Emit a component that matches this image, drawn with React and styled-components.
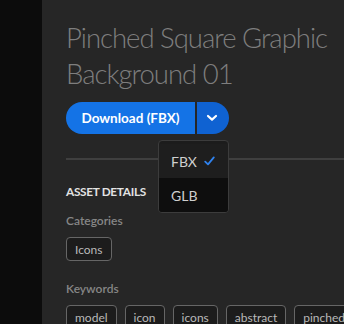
import React from "react";
import styled, { createGlobalStyle } from "styled-components";

const Global = createGlobalStyle`
  html, body { margin: 0; padding: 0; background: #262626; }
  body { font-family: Lato, "Open Sans", sans-serif; overflow: hidden; }
`;

const Page = styled.div`
  display: flex;
  width: 344px;
  height: 324px;
  overflow: hidden;
`;

const Rail = styled.div`
  width: 42px;
  flex: none;
  background: #0c0c0c;
`;

const Main = styled.main`
  flex: 1;
  min-width: 0;
  background: #262626;
  padding: 20px 0 0 24px;
`;

const Title = styled.h1`
  margin: 0;
  font-weight: 300;
  font-size: 27.5px;
  letter-spacing: -1px;
  line-height: 36px;
  color: #7e7e7e;
  white-space: nowrap;
`;

const ButtonGroup = styled.div`
  position: relative;
  display: flex;
  gap: 2px;
  margin-top: 10px;
`;

const PrimaryButton = styled.button`
  height: 32px;
  width: 129px;
  border: 0;
  border-radius: 16px 0 0 16px;
  background: #1473e6;
  color: #fff;
  font-family: inherit;
  font-weight: 700;
  font-size: 13.5px;
  padding: 0;
`;

const SplitButton = styled.button`
  height: 32px;
  width: 32px;
  border: 0;
  border-radius: 0 16px 16px 0;
  background: #0f62d2;
  display: flex;
  align-items: center;
  justify-content: center;
  padding: 0 2px 0 0;
`;

const Menu = styled.div`
  position: absolute;
  left: 92px;
  top: 38px;
  width: 69px;
  border: 1px solid #3c3c3c;
  border-radius: 4px;
  background: #1c1c1c;
  padding-top: 3px;
  overflow: hidden;
  z-index: 2;
`;

const MenuItem = styled.div`
  display: flex;
  align-items: center;
  justify-content: space-between;
  height: 34px;
  padding: 0 13px 0 12px;
  background: ${(p) => (p.$dark ? "#0e0e0e" : "#1e1e1e")};
  color: #cfcfcf;
  font-size: 14px;
`;

const Divider = styled.hr`
  margin: 24px 0 0;
  border: 0;
  height: 2px;
  background: #3f3f3f;
`;

const SectionHeading = styled.h2`
  margin: 24px 0 0;
  font-size: 11.8px;
  line-height: 16px;
  font-weight: 700;
  color: #e2e2e2;
  letter-spacing: -0.3px;
`;

const Label = styled.div`
  margin-top: ${(p) => p.$mt}px;
  font-size: 12px;
  line-height: 16px;
  font-weight: 600;
  color: #868686;
`;

const TagRow = styled.div`
  display: flex;
  gap: 8px;
  margin-top: 8px;
  white-space: nowrap;
`;

const Tag = styled.span`
  flex: none;
  height: 24px;
  box-sizing: border-box;
  padding: 0 8px;
  display: inline-flex;
  align-items: center;
  border: 1px solid #666;
  border-radius: 4px;
  background: #1c1c1c;
  color: #b9b9b9;
  font-size: 12px;
`;

const Chevron = () => (
  <svg width="12" height="8" viewBox="0 0 12 8">
    <path d="M2 2 L6 5.6 L10 2" fill="none" stroke="#fff" strokeWidth="2.2" strokeLinecap="round" strokeLinejoin="round" />
  </svg>
);

const Check = () => (
  <svg width="11" height="10" viewBox="0 0 11 10">
    <path d="M1.2 5.6 L4 8.4 L9.8 1.4" fill="none" stroke="#2f82ee" strokeWidth="1.8" strokeLinecap="round" strokeLinejoin="round" />
  </svg>
);

const keywords = ["model", "icon", "icons", "abstract", "pinched"];

export default function App() {
  return (
    <Page>
      <Global />
      <Rail />
      <Main>
        <Title>
          Pinched Square Graphic
          <br />
          Background 01
        </Title>
        <ButtonGroup>
          <PrimaryButton>Download (FBX)</PrimaryButton>
          <SplitButton>
            <Chevron />
          </SplitButton>
          <Menu>
            <MenuItem>
              FBX <Check />
            </MenuItem>
            <MenuItem $dark>GLB</MenuItem>
          </Menu>
        </ButtonGroup>
        <Divider />
        <SectionHeading>ASSET DETAILS</SectionHeading>
        <Label $mt={13}>Categories</Label>
        <TagRow>
          <Tag>Icons</Tag>
        </TagRow>
        <Label $mt={20}>Keywords</Label>
        <TagRow>
          {keywords.map((k) => (
            <Tag key={k}>{k}</Tag>
          ))}
        </TagRow>
      </Main>
    </Page>
  );
}
